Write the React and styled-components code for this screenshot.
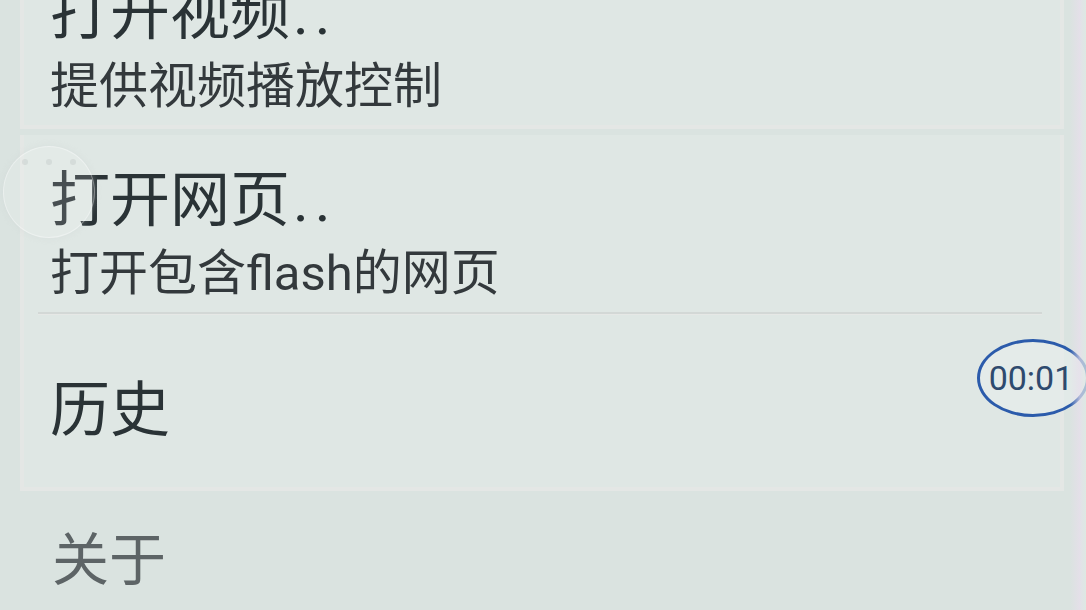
import React from 'react';
import styled, { createGlobalStyle } from 'styled-components';

const GlobalStyle = createGlobalStyle`
  html, body {
    margin: 0;
    padding: 0;
    background: #dae3e0;
    overflow: hidden;
  }
  * {
    box-sizing: border-box;
  }
`;

const Screen = styled.div`
  position: relative;
  width: 1086px;
  height: 610px;
  overflow: hidden;
  background: #dae3e0;
  font-family: Roboto, "Noto Sans CJK SC", sans-serif;
`;

// 스크롤된 상태라 위로 밀려 있음
const List = styled.div`
  display: flex;
  flex-direction: column;
  gap: 6px;
  margin-top: -50px;
  padding: 0 22px 0 20px;
`;

const Card = styled.div`
  background: #dfe7e4;
  border: 4px solid #e4e7e5;
  border-top: none;
`;

const Row = styled.div`
  padding: ${(p) => p.$pad || '28px 26px 8px'};
`;

const Title = styled.div`
  font-size: 60px;
  line-height: 1.2;
  color: #2a3336;
  white-space: nowrap;
`;

const Dots = styled.span`
  margin-left: 3px;
  letter-spacing: 6px;
`;

const Sub = styled.div`
  margin-top: 8px;
  font-size: 49px;
  line-height: 1.2;
  color: #33393c;
  white-space: nowrap;
`;

const Divider = styled.div`
  height: 3px;
  margin: 0 18px 0 14px;
  background: #d3d8d6;
  border-bottom: 1px solid #e6e8e6;
`;

const Plain = styled.div`
  padding: 36px 52px 0;
  font-size: 57px;
  line-height: 1.2;
  color: #5d6466;
`;

const FloatBall = styled.div`
  position: absolute;
  left: 3px;
  top: 146px;
  width: 92px;
  height: 92px;
  border-radius: 50%;
  background: rgba(255, 255, 255, 0.14);
  border: 1px solid rgba(255, 255, 255, 0.35);
  box-shadow: 0 0 6px rgba(200, 205, 205, 0.3);
  display: flex;
  justify-content: center;
  gap: 18px;
  padding-top: 12px;

  span {
    width: 6px;
    height: 6px;
    border-radius: 50%;
    background: rgba(170, 178, 178, 0.25);
  }
`;

const Timer = styled.div`
  position: absolute;
  left: 977px;
  top: 339px;
  width: 112px;
  height: 78px;
  border: 3px solid #2b5bab;
  border-radius: 50%;
  display: flex;
  align-items: center;
  justify-content: center;
  padding-right: 4px;
  font-family: Roboto, sans-serif;
  font-size: 34px;
  color: #2e4a6e;
  background: rgba(232, 238, 236, 0.6);
`;

const EdgeStrip = styled.div`
  position: absolute;
  right: 0;
  top: 0;
  width: 16px;
  height: 100%;
  background: linear-gradient(90deg, rgba(230, 224, 232, 0) 0%, rgba(232, 222, 236, 0.7) 60%, rgba(222, 236, 228, 0.7) 100%);
`;

function App() {
  return (
    <>
      <GlobalStyle />
      <Screen>
        <List>
          <Card>
            <Row>
              <Title>打开视频<Dots>..</Dots></Title>
              <Sub>提供视频播放控制</Sub>
            </Row>
          </Card>

          <Card>
            <Row $pad="30px 26px 8px">
              <Title>打开网页<Dots>..</Dots></Title>
              <Sub>打开包含flash的网页</Sub>
            </Row>
            <Divider />
            <Row $pad="60px 26px 40px">
              <Title>历史</Title>
            </Row>
          </Card>
        </List>

        <Plain>关于</Plain>

        <FloatBall>
          <span />
          <span />
          <span />
        </FloatBall>
        <Timer>00:01</Timer>
        <EdgeStrip />
      </Screen>
    </>
  );
}

export default App;
